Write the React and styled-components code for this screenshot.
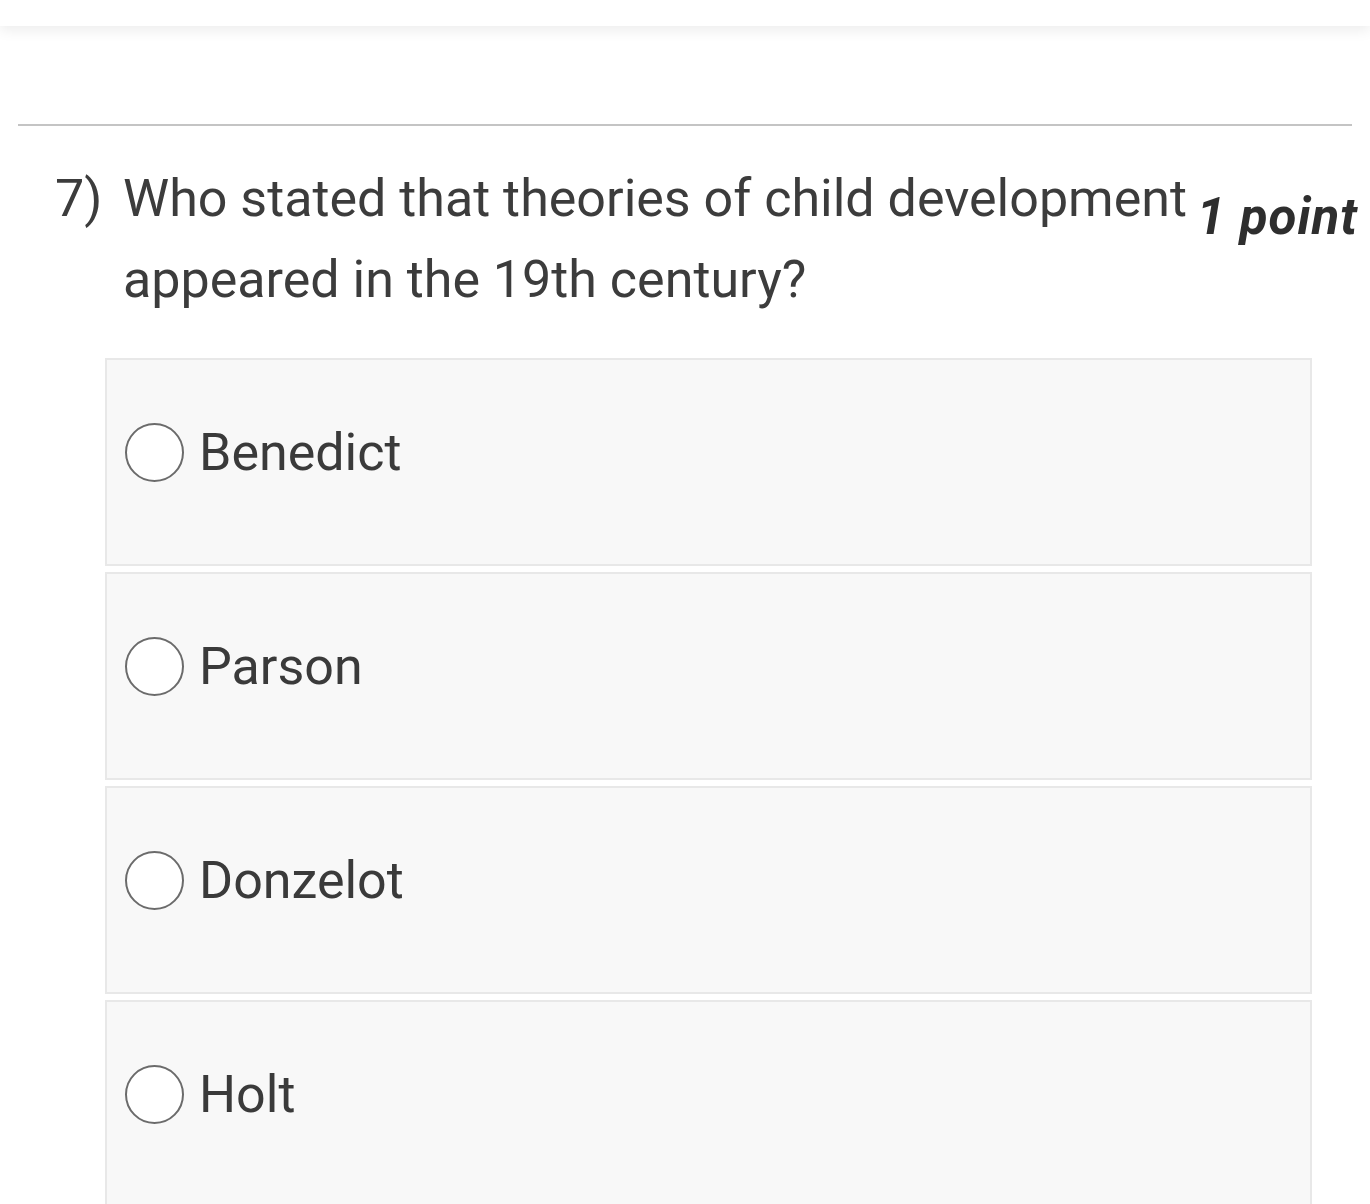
import styled, { createGlobalStyle } from "styled-components";

const GlobalStyle = createGlobalStyle`
  html, body {
    margin: 0;
    padding: 0;
    background: #ffffff;
    font-family: Roboto, "Liberation Sans", sans-serif;
    color: #3c3c3c;
  }
`;

const Page = styled.div`
  width: 1370px;
  height: 1204px;
  overflow: hidden;
  background: #fff;
`;

const TopBar = styled.div`
  height: 26px;
  background: #fff;
  box-shadow: 0 4px 14px rgba(0, 0, 0, 0.08);
`;

const Divider = styled.hr`
  margin: 98px 18px 0 18px;
  border: none;
  height: 2px;
  background: #c4c4c4;
`;

const Question = styled.div`
  display: flex;
  align-items: flex-start;
  padding: 32px 12px 0 55px;
`;

const Number = styled.span`
  width: 68px;
  flex-shrink: 0;
  font-size: 52px;
  line-height: 81px;
`;

const Title = styled.div`
  flex: 1;
  font-size: 52px;
  line-height: 81px;
`;

const Points = styled.span`
  flex-shrink: 0;
  margin: 18px 0 0 4px;
  font-size: 51px;
  line-height: 81px;
  font-weight: 700;
  font-style: italic;
  color: #2e2e2e;
  letter-spacing: 1px;
`;

const Options = styled.div`
  display: flex;
  flex-direction: column;
  gap: 6px;
  margin: 38px 58px 0 105px;
`;

const Option = styled.label`
  display: flex;
  align-items: center;
  gap: 15px;
  height: 208px;
  box-sizing: border-box;
  padding: 0 0 20px 18px;
  background: #f8f8f8;
  border: 2px solid #e8e8e8;
`;

const Radio = styled.span`
  width: 59px;
  height: 59px;
  flex-shrink: 0;
  box-sizing: border-box;
  border-radius: 50%;
  border: 2.5px solid #6b6b6b;
  background: #fff;
`;

const OptionText = styled.span`
  font-size: 52px;
  color: #3a3a3a;
`;

const answers = ["Benedict", "Parson", "Donzelot", "Holt"];

export default function App() {
  return (
    <Page>
      <GlobalStyle />
      <TopBar />
      <Divider />
      <Question>
        <Number>7)</Number>
        <Title>
          Who stated that theories of child development appeared in the 19th
          century?
        </Title>
        <Points>1 point</Points>
      </Question>
      <Options>
        {answers.map((a) => (
          <Option key={a}>
            <Radio />
            <OptionText>{a}</OptionText>
          </Option>
        ))}
      </Options>
    </Page>
  );
}
